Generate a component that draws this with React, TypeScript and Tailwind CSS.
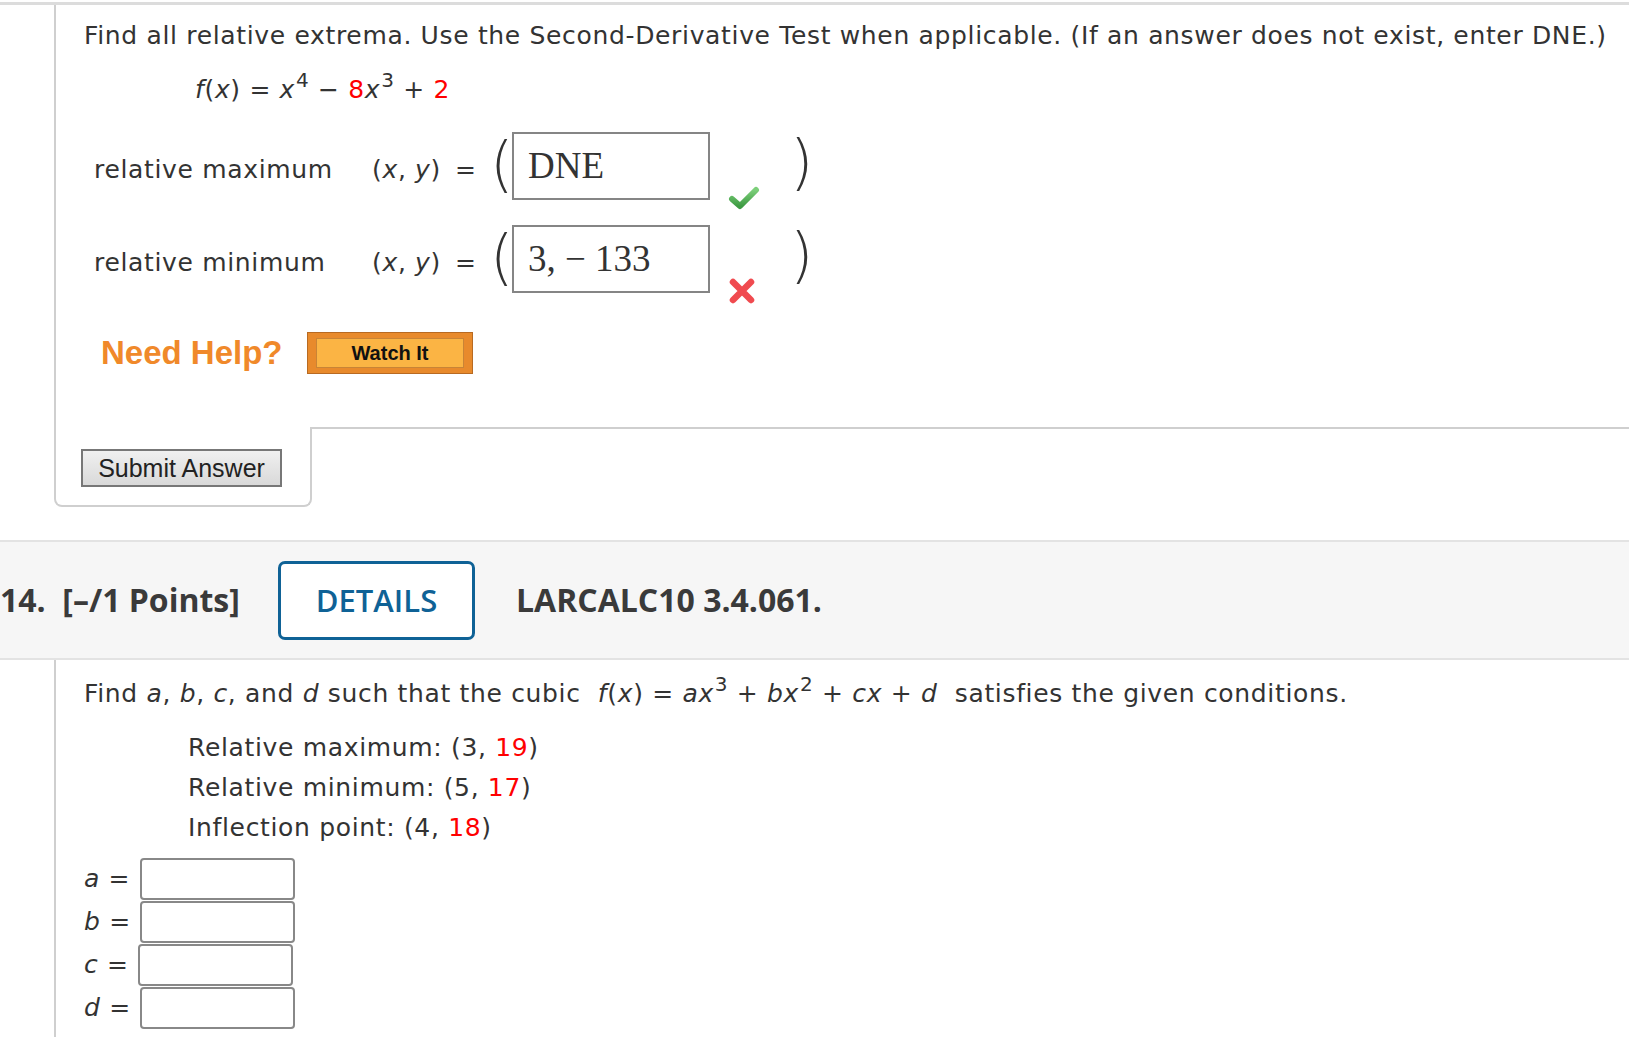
// Practice assignment page: two calculus questions, WebAssign style
import React from "react";

const body = "font-['DejaVu_Sans',Verdana,sans-serif]";
const mathFont = "font-['Liberation_Serif','Times_New_Roman',serif]";

// Green check drawn as a thick stroke
const CheckMark = () => (
  <svg width="32" height="28" viewBox="0 0 32 28">
    <defs>
      <linearGradient id="chk" x1="0" y1="0" x2="0" y2="1">
        <stop offset="0" stopColor="#7ccf7a" />
        <stop offset="1" stopColor="#3e9b43" />
      </linearGradient>
    </defs>
    <path d="M4 15 L12 22 L28 6" fill="none" stroke="url(#chk)" strokeWidth="6" strokeLinecap="round" strokeLinejoin="round" />
  </svg>
);

// Red cross for a wrong answer
const CrossMark = () => (
  <svg width="28" height="28" viewBox="0 0 28 28">
    <path d="M5 5 L23 23 M23 5 L5 23" fill="none" stroke="#f04a4f" strokeWidth="6.5" strokeLinecap="round" />
  </svg>
);

const Paren = ({ ch }: { ch: string }) => (
  <span className="font-['DejaVu_Sans',sans-serif] font-extralight text-[60px] leading-none text-[#333] inline-block">{ch}</span>
);

const Sup = ({ n }: { n: string }) => (
  <span className="relative -top-[0.55em] text-[0.8em] leading-none ml-[1px]">{n}</span>
);

// One "(x, y) = ( [answer] )" row
const ExtremaRow = ({ label, answer, ok }: { label: string; answer: string; ok: boolean }) => (
  <div className="flex items-center h-[68px] ml-[10px]">
    <div className="w-[278px] pt-[8px]">{label}</div>
    <div className="w-[122px] pt-[8px]">
      (<i>x</i>, <i>y</i>)<span className="ml-[14px]">=</span>
    </div>
    <div className="w-[16px] flex justify-center -mt-[4px]"><Paren ch="(" /></div>
    <div className={`ml-[2px] w-[198px] h-[68px] border-2 border-[#858585] pl-[14px] flex items-center ${mathFont} text-[37px] tracking-normal text-[#333]`}>
      {answer}
    </div>
    <div className="w-[80px] h-full relative">
      <div className="absolute left-[18px] top-[52px]">{ok ? <CheckMark /> : <CrossMark />}</div>
    </div>
    <div className="-mt-[6px]"><Paren ch=")" /></div>
  </div>
);

const LetterInput = ({ v, shift }: { v: string; shift?: boolean }) => (
  <div className="flex items-center h-[42px]">
    <div className="w-[56px]"><i>{v}</i> =</div>
    <div className={`w-[155px] h-[42px] border-2 border-[#888] rounded-[4px] ${shift ? "-ml-[2px]" : ""}`} />
  </div>
);

export default function App() {
  return (
    <div className={`w-[1629px] h-[1037px] overflow-hidden bg-white text-[#333] text-[25px] tracking-[0.66px] ${body}`}>
      <div className="h-[3px] mt-[2px] bg-[#dcdcdc]" />

      {/* Question 13 */}
      <div className="ml-[54px] h-[422px] border-l-2 border-[#cfcfcf] pl-[28px] pt-[16px]">
        <p className="leading-[30px]">
          Find all relative extrema. Use the Second-Derivative Test when applicable. (If an answer does not exist, enter DNE.)
        </p>
        <p className="leading-[30px] mt-[24px] ml-[111px]">
          <i>f</i>(<i>x</i>) = <i>x</i><Sup n="4" /> − <span className="text-[#f00]">8</span><i>x</i><Sup n="3" /> + <span className="text-[#f00]">2</span>
        </p>
        <div className="mt-[27px]">
          <ExtremaRow label="relative maximum" answer="DNE" ok />
        </div>
        <div className="mt-[25px]">
          <ExtremaRow label="relative minimum" answer="3, − 133" ok={false} />
        </div>
        <div className="mt-[39px] ml-[17px] flex items-center h-[42px] tracking-normal">
          <span className="font-['Liberation_Sans',Arial,sans-serif] font-bold text-[33px] text-[#f0892a] w-[206px]">Need Help?</span>
          <button className="w-[166px] h-[42px] bg-[#e88a2c] border border-[#b86a22] p-[5px] pl-[8px] pr-[8px]">
            <span className="flex items-center justify-center w-full h-full bg-[#fbb444] border border-[#c98436] font-['Liberation_Sans',Arial,sans-serif] font-bold text-[20px] text-[#111]">
              Watch It
            </span>
          </button>
        </div>
      </div>

      <div className="flex">
        <div className="ml-[54px] w-[258px] h-[80px] border-l-2 border-r-2 border-b-2 border-[#cfcfcf] rounded-b-[8px] pl-[25px] pt-[22px]">
          <button className="w-[201px] h-[38px] border-2 border-[#777] bg-gradient-to-b from-[#f0f0f0] to-[#d9d9d9] font-['Liberation_Sans',Arial,sans-serif] text-[25px] tracking-normal text-[#222] leading-none">
            Submit Answer
          </button>
        </div>
        <div className="flex-1 border-t-2 border-[#cfcfcf]" />
      </div>

      {/* Question 14 header */}
      <div className="mt-[33px] h-[120px] bg-[#f6f6f6] border-y-2 border-[#e3e3e3] flex items-center font-['Open_Sans',sans-serif] text-[32px] tracking-normal font-bold text-[#3a3a3a]">
        <span className="w-[278px] whitespace-pre">14.  [–/1 Points]</span>
        <span className="w-[197px] h-[79px] border-[3px] border-[#0f6296] rounded-[7px] bg-white flex items-center justify-center font-semibold text-[31px] text-[#0f6296]">
          DETAILS
        </span>
        <span className="ml-[41px]">LARCALC10 3.4.061.</span>
      </div>

      {/* Question 14 body */}
      <div className="ml-[54px] h-[400px] border-l-2 border-[#cfcfcf] pl-[28px] pt-[19px]">
        <p className="leading-[30px]">
          Find <i>a</i>, <i>b</i>, <i>c</i>, and <i>d</i> such that the cubic &nbsp;<i>f</i>(<i>x</i>) = <i>a</i><i>x</i><Sup n="3" /> + <i>b</i><i>x</i><Sup n="2" /> + <i>c</i><i>x</i> + <i>d</i>&nbsp; satisfies the given conditions.
        </p>
        <div className="mt-[19px] ml-[104px] leading-[40px]">
          <div>Relative maximum: (3, <span className="text-[#f00]">19</span>)</div>
          <div>Relative minimum: (5, <span className="text-[#f00]">17</span>)</div>
          <div>Inflection point: (4, <span className="text-[#f00]">18</span>)</div>
        </div>
        <div className="mt-[10px] flex flex-col gap-[1px]">
          <LetterInput v="a" />
          <LetterInput v="b" />
          <LetterInput v="c" shift />
          <LetterInput v="d" />
        </div>
      </div>
    </div>
  );
}
